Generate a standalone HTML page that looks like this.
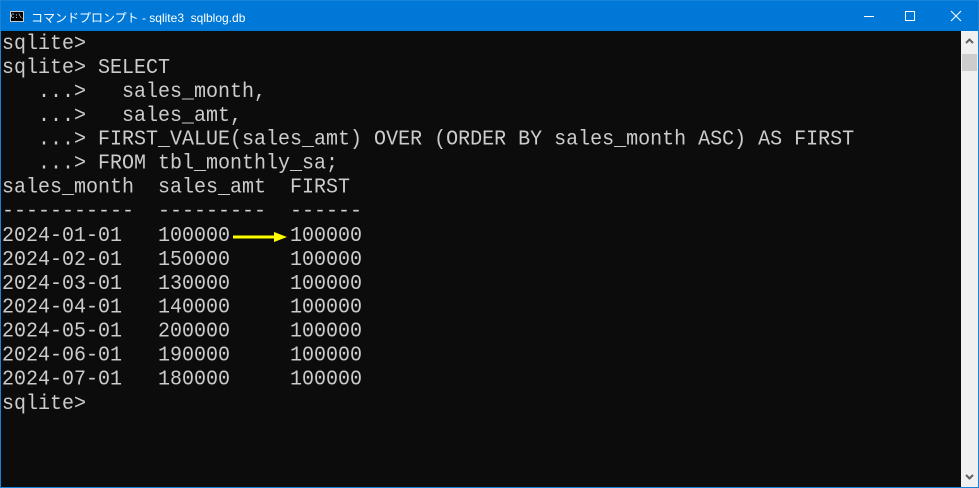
<!DOCTYPE html>
<html><head><meta charset="utf-8"><style>
html,body{margin:0;padding:0;width:979px;height:488px;overflow:hidden;background:#0c0c0c}
.win{position:absolute;left:0;top:0;width:977px;height:486px;border:1px solid #1883d7;background:#0c0c0c}
.title{position:absolute;left:0;top:0;width:977px;height:30px;background:#0078d7;color:#fff;font-family:"Liberation Sans","Noto Sans CJK JP",sans-serif;font-size:12px}
.title .t{position:absolute;left:30px;top:8px}
.icon{position:absolute;left:9px;top:10px;width:14px;height:11px;background:#000;border:1px solid #ccc;box-sizing:border-box;color:#fff;font-size:6px;line-height:9px;font-family:"Liberation Mono",monospace;overflow:hidden}
.sb{position:absolute;left:960px;top:30px;width:17px;height:456px;background:#f0f0f0}
.thumb{position:absolute;left:1px;top:23px;width:15px;height:17px;background:#cdcdcd}
pre{position:absolute;left:2px;top:33px;margin:0;font-family:"Liberation Mono",monospace;font-size:20px;line-height:22.86px;color:#cccccc;transform-origin:0 0;transform:scaleY(1.05)}
</style></head><body>
<div class="win">
<div class="title"><div class="icon">C:\_</div><span class="t">コマンドプロンプト - sqlite3&nbsp; sqlblog.db</span>
<svg style="position:absolute;left:860px;top:9px" width="110" height="14">
<line x1="3" y1="6.5" x2="13" y2="6.5" stroke="#fff" stroke-width="1"/>
<rect x="44.5" y="1.5" width="9" height="9" fill="none" stroke="#fff"/>
<path d="M90 1 L100 11 M100 1 L90 11" stroke="#fff" stroke-width="1"/>
</svg></div>
<div class="sb"><svg width="17" height="456" style="position:absolute;left:0;top:0"><path d="M5 12 L8.5 8.5 L12 12" stroke="#606060" stroke-width="2" fill="none"/><path d="M5 444 L8.5 447.5 L12 444" stroke="#606060" stroke-width="2" fill="none"/></svg><div class="thumb"></div></div>
</div>
<pre>sqlite>
sqlite> SELECT
   ...>   sales_month,
   ...>   sales_amt,
   ...> FIRST_VALUE(sales_amt) OVER (ORDER BY sales_month ASC) AS FIRST
   ...> FROM tbl_monthly_sa;
sales_month  sales_amt  FIRST
-----------  ---------  ------
2024-01-01   100000     100000
2024-02-01   150000     100000
2024-03-01   130000     100000
2024-04-01   140000     100000
2024-05-01   200000     100000
2024-06-01   190000     100000
2024-07-01   180000     100000
sqlite></pre>
<svg style="position:absolute;left:230px;top:229px" width="60" height="16"><line x1="3" y1="8" x2="46" y2="8" stroke="#ffff00" stroke-width="3"/><path d="M44 3 L57 8 L44 13 Z" fill="#ffff00"/></svg>
</body></html>
